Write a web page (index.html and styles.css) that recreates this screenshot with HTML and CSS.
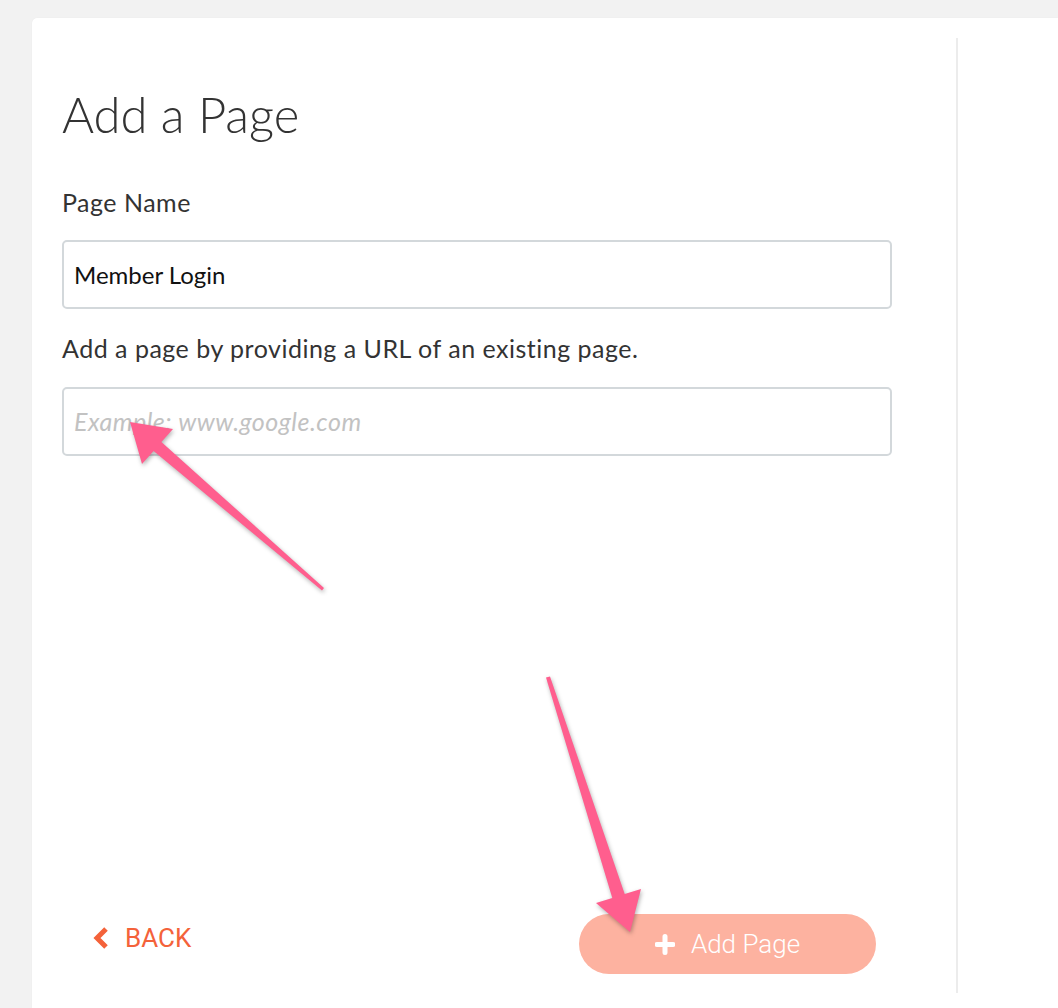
FILE: index.html
```html
<!DOCTYPE html>
<html>
<head>
<meta charset="utf-8">
<title>Add a Page</title>
<link rel="stylesheet" href="styles.css">
</head>
<body>
<div class="page">
  <div class="card">
    <div class="main">
      <h1 class="title">Add a Page</h1>
      <label class="label">Page Name</label>
      <input class="field" type="text" value="Member Login">
      <label class="label">Add a page by providing a URL of an existing page.</label>
      <input class="field" type="text" placeholder="Example: www.google.com">
      <div class="footer">
        <a class="back" href="#">
          <svg class="chev" width="16" height="24" viewBox="0 0 16 24"><path d="M13 3 L4 12 L13 21" fill="none" stroke="#f4623a" stroke-width="5" stroke-linejoin="miter"/></svg>
          <span>BACK</span>
        </a>
        <button class="add-btn" type="button">
          <svg class="plus" width="20" height="21" viewBox="0 0 20 21"><path d="M10 2.5 V18.5 M2 10.5 H18" stroke="#fff" stroke-width="5" stroke-linecap="round"/></svg>
          <span>Add Page</span>
        </button>
      </div>
    </div>
    <div class="divider"></div>
    <div class="side"></div>
  </div>
  <svg class="arrows" width="1058" height="1008" viewBox="0 0 1058 1008">
    <polygon points="130,422 173,429 161.4,442 324,588 322,590.5 153.6,451 142,464" fill="#ff5e8e"/>
    <polygon points="630,932 641,889 624.7,894 550,676.4 546,677.6 612.3,898 596,903" fill="#ff5e8e"/>
  </svg>
</div>
</body>
</html>
```
FILE: styles.css
```css
* { box-sizing: border-box; }
html, body { margin: 0; padding: 0; }
body {
  background: #f2f2f2;
  font-family: "Lato", "Noto Sans", sans-serif;
  color: #333;
  overflow: hidden;
}
.page {
  position: relative;
  width: 1058px;
  height: 1008px;
  padding: 18px 0 0 32px;
}
.card {
  display: flex;
  background: #fff;
  border-radius: 5px 0 0 0;
  height: 990px;
  box-shadow: 0 0 1px rgba(0,0,0,0.08);
}
.main {
  width: 924px;
  display: flex;
  flex-direction: column;
  padding: 0 64px 34px 30px;
}
.title {
  font-family: "Lato", sans-serif;
  font-weight: 300;
  font-size: 49px;
  line-height: 60px;
  margin: 66px 0 0 0;
  color: #333;
}
.label {
  display: block;
  font-size: 25px;
  line-height: 30px;
  letter-spacing: 0.5px;
  margin-top: 43px;
  color: #333;
}
.field + .label { margin-top: 24px; }
.field {
  width: 830px;
  height: 69px;
  margin-top: 23px;
  border: 2px solid #d3d8db;
  border-radius: 5px;
  padding: 0 10px;
  font-family: "Lato", sans-serif;
  font-size: 24px;
  color: #111;
  background: #fff;
  outline: none;
}
.field + .label + .field { margin-top: 24px; }
.field::placeholder {
  color: #c2c2c2;
  font-style: italic;
  font-size: 25px;
  letter-spacing: 0.5px;
}
.footer {
  margin-top: auto;
  display: flex;
  align-items: center;
  justify-content: space-between;
  padding: 0 16px 0 31px;
}
.back {
  display: flex;
  align-items: center;
  gap: 16px;
  text-decoration: none;
  color: #f4623a;
  font-family: "Roboto", sans-serif;
  font-size: 26px;
  margin-top: -12px;
}
.chev { display: block; }
.add-btn {
  width: 297px;
  height: 60px;
  border: none;
  border-radius: 30px;
  background: #fdb2a0;
  color: #fff;
  font-family: "Roboto", sans-serif;
  font-weight: 300;
  font-size: 26px;
  display: flex;
  align-items: center;
  justify-content: center;
  gap: 16px;
  padding: 0;
}
.plus { display: block; }
.divider {
  width: 2px;
  background: #ececec;
  margin: 20px 0 15px 0;
}
.side { flex: 1; }
.arrows {
  position: absolute;
  left: 0;
  top: 0;
  pointer-events: none;
  filter: drop-shadow(1px 2px 2px rgba(0,0,0,0.3));
}
```
